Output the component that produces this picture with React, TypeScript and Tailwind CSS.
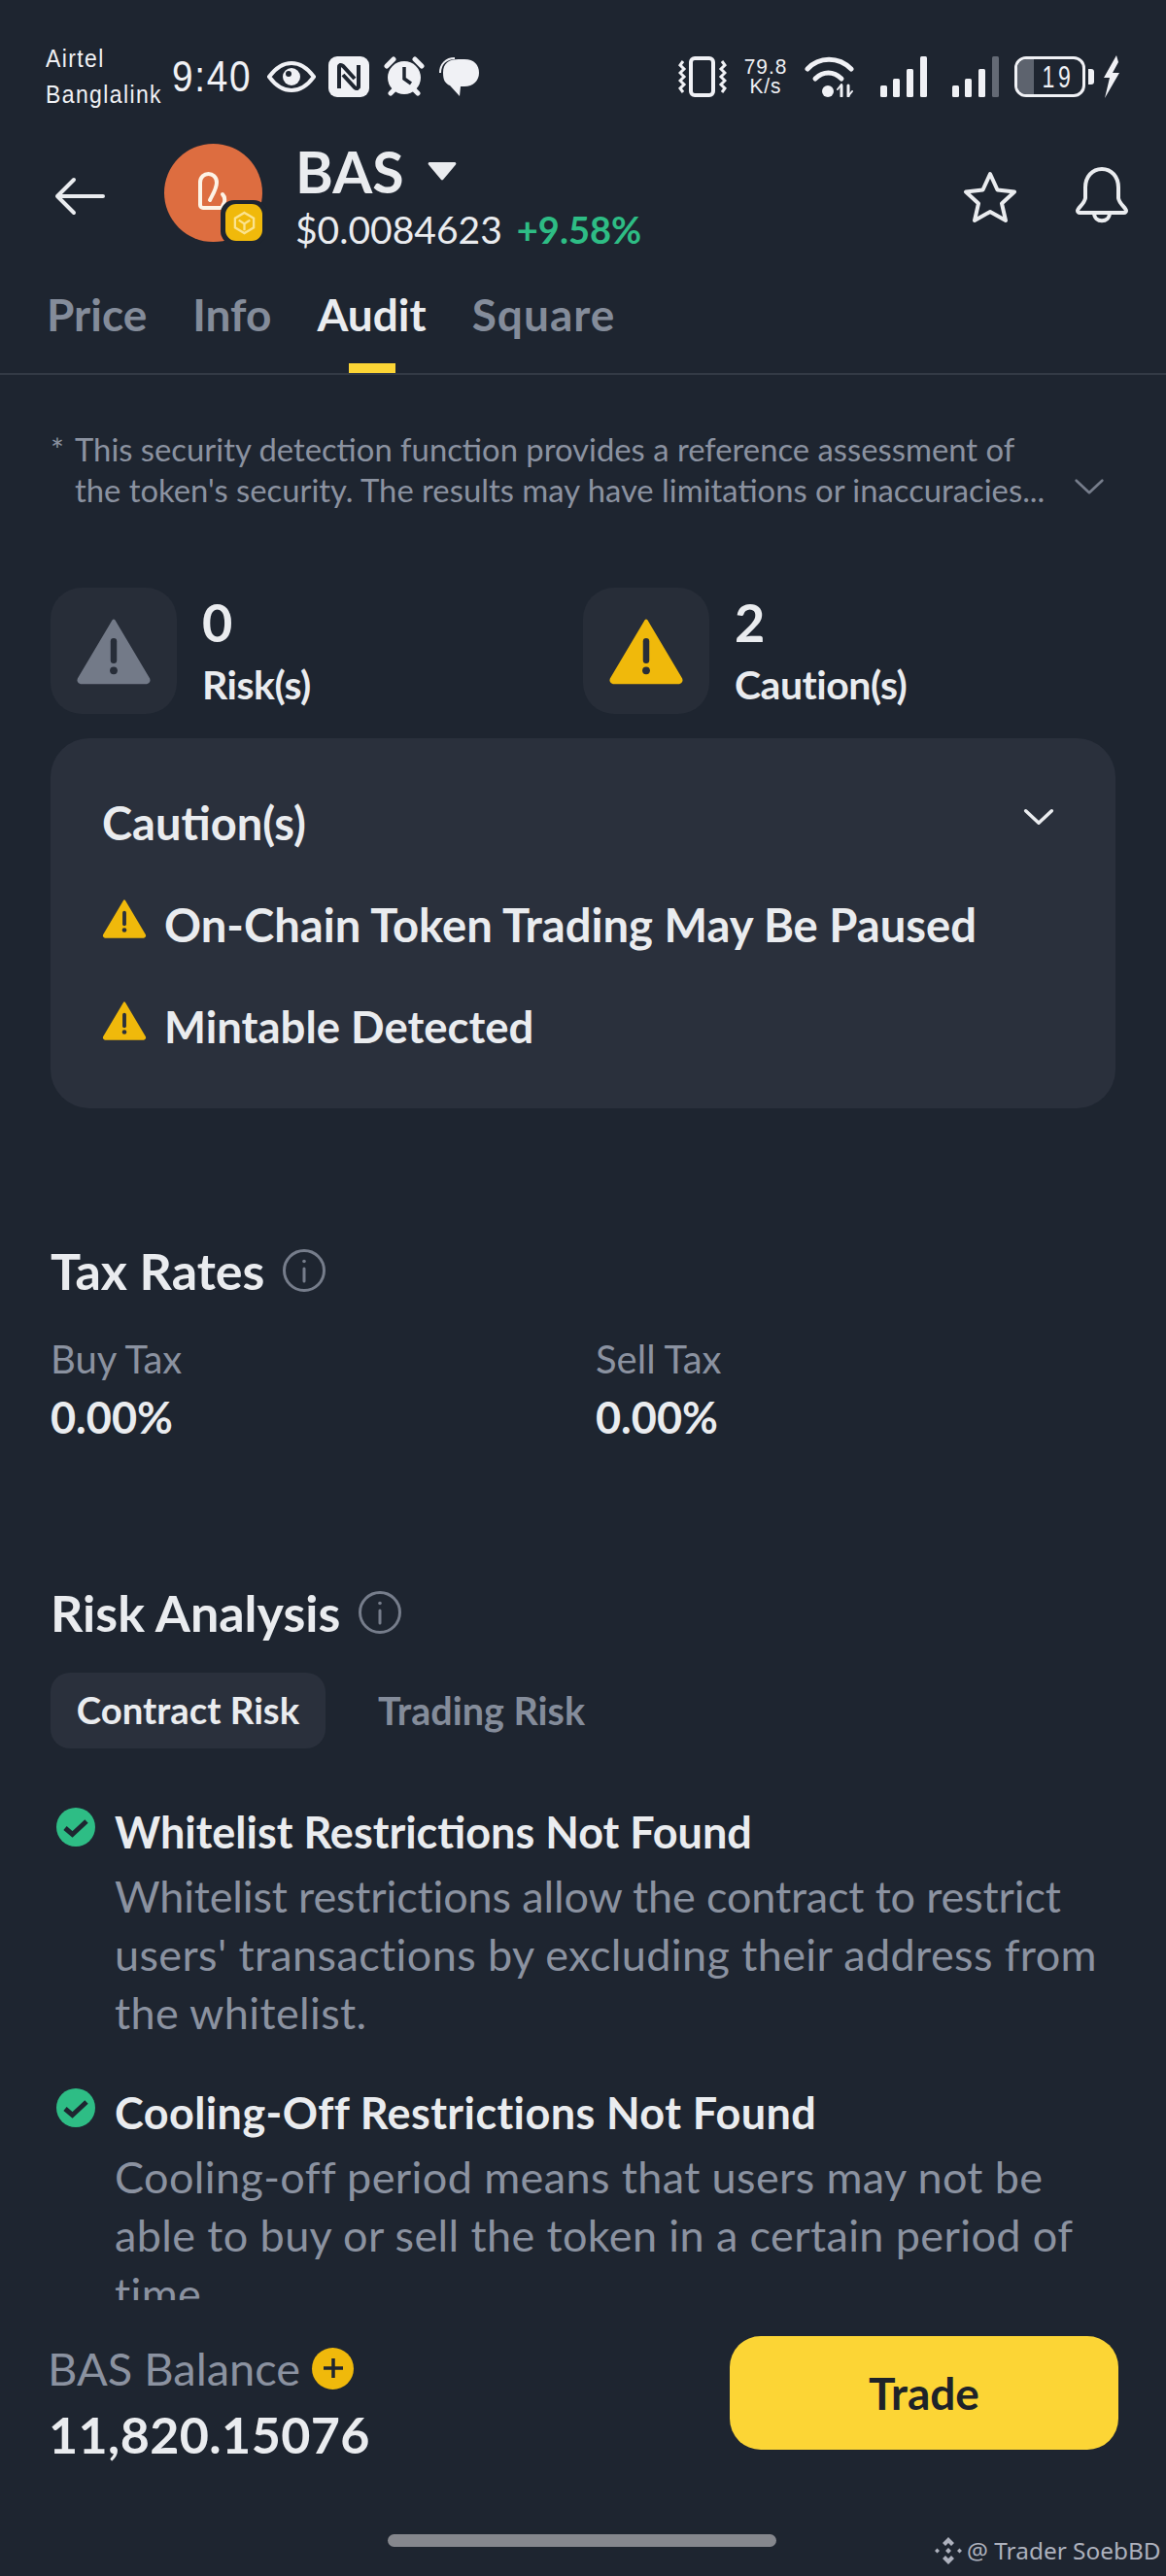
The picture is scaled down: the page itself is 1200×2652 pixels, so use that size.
import React from 'react';

const Triangle: React.FC<{ fill: string; mark: string; className?: string }> = ({ fill, mark, className }) => (
  <svg className={className} viewBox="0 0 48 42" fill="none">
    <path d="M24 2 L46 39 a1.5 1.5 0 0 1 -1 2 H3 a1.5 1.5 0 0 1 -1 -2 Z" fill={fill} stroke={fill} strokeWidth={2} strokeLinejoin="round" />
    <path d="M24 15v12" stroke={mark} strokeWidth={4} strokeLinecap="round" />
    <circle cx={24} cy={33.5} r={2.4} fill={mark} />
  </svg>
);

const InfoIcon: React.FC = () => (
  <svg className="w-[46px] h-[46px]" viewBox="0 0 46 46" fill="none" stroke="#767d8b" strokeWidth={3}>
    <circle cx={23} cy={23} r={20.5} />
    <path d="M23 21v13" strokeLinecap="round" />
    <circle cx={23} cy={13.5} r={1.8} fill="#767d8b" stroke="none" />
  </svg>
);

const CheckBadge: React.FC = () => (
  <svg className="w-[40px] h-[40px] ml-[6px] mt-[5px] shrink-0" viewBox="0 0 40 40">
    <circle cx={20} cy={20} r={20} fill="#2ebd85" />
    <path d="M9 21l7.5 6.5L31 14" fill="none" stroke="#1e2530" strokeWidth={5} />
  </svg>
);

const Chevron: React.FC<{ className: string; color: string; width: number }> = ({ className, color, width }) => (
  <svg className={className} viewBox="0 0 36 20" fill="none" stroke={color} strokeWidth={width} strokeLinecap="round" strokeLinejoin="round">
    <path d="M3 3l15 14L33 3" />
  </svg>
);

// status bar glyphs, all on a 41px tall line
const StatusLeft: React.FC = () => (
  <div className="flex items-center text-[#f0f1f5] h-[62px]">
    <div className="w-[130px] ml-[47px] font-['Liberation_Sans',sans-serif] text-[25px] leading-[37px] tracking-[1.5px] origin-left scale-x-[0.92]">
      <div className="whitespace-nowrap">Airtel</div>
      <div className="whitespace-nowrap">Banglalink</div>
    </div>
    <span className="w-[98px] font-['Liberation_Sans',sans-serif] text-[44px] leading-none tracking-[2px] origin-left scale-x-[0.88] whitespace-nowrap">9:40</span>
    <svg className="w-[50px] h-[34px]" viewBox="0 0 50 34" fill="none">
      <path d="M2 17C10 6 17 3 25 3s15 3 23 14c-8 11-15 14-23 14S10 28 2 17Z" stroke="#f0f1f5" strokeWidth={4} />
      <circle cx={25} cy={17} r={9} fill="#f0f1f5" />
      <circle cx={22} cy={14} r={3} fill="#1e2530" />
    </svg>
    <svg className="w-[42px] h-[42px] ml-[13px]" viewBox="0 0 42 42" fill="none">
      <rect width={42} height={42} rx={9} fill="#f0f1f5" />
      <path d="M11 33V11c0-2 2-3 4-1l12 13M31 9v22c0 2-2 3-4 1L15 19" stroke="#1e2530" strokeWidth={4} />
      <path d="M11 9v24M31 9v24" stroke="#1e2530" strokeWidth={3} />
    </svg>
    <svg className="w-[42px] h-[42px] ml-[15px]" viewBox="0 0 42 42" fill="none">
      <circle cx={21} cy={22} r={17} fill="#f0f1f5" />
      <path d="M3 10 10 3M39 10 32 3M7 38l5-5M35 38l-5-5" stroke="#f0f1f5" strokeWidth={5} strokeLinecap="round" />
      <path d="M21 11v12l7 5" stroke="#1e2530" strokeWidth={3.5} />
    </svg>
    <svg className="w-[42px] h-[42px] ml-[15px]" viewBox="0 0 42 42">
      <path d="M4 17C4 7 10 3 20 3h6c10 0 15 6 15 14s-6 14-15 14h-4l-1 10-10-11C6 28 4 24 4 17Z" fill="#f0f1f5" />
      <path d="M1 17C1 8 7 2 16 2" fill="none" stroke="#f0f1f5" strokeWidth={2} />
    </svg>
  </div>
);

const Bars: React.FC<{ dimLast?: boolean }> = ({ dimLast }) => (
  <svg className="w-[48px] h-[42px]" viewBox="0 0 48 42" fill="#f0f1f5">
    <rect x={0} y={30} width={7} height={12} rx={1.5} />
    <rect x={13} y={23} width={7} height={19} rx={1.5} />
    <rect x={27} y={13} width={7} height={29} rx={1.5} />
    <rect x={41} y={0} width={7} height={42} rx={1.5} fill={dimLast ? '#646a75' : '#f0f1f5'} />
  </svg>
);

const StatusRight: React.FC = () => (
  <div className="flex items-center text-[#f0f1f5] h-[62px] mr-[48px]">
    <svg className="w-[50px] h-[42px]" viewBox="0 0 50 42" fill="none" stroke="#f0f1f5">
      <rect x={13} y={2} width={23} height={38} rx={4} strokeWidth={4} />
      <path d="M5 5l-3 4 4 4-4 4 4 4-4 4 4 4-4 4 3 4M45 5l3 4-4 4 4 4-4 4 4 4-4 4 4 4-3 4" strokeWidth={3} />
    </svg>
    <div className="w-[50px] ml-[15px] font-['Liberation_Sans',sans-serif] text-center text-[22px] leading-[20px] tracking-[1px] scale-x-[0.95]">
      <div>79.8</div>
      <div>K/s</div>
    </div>
    <svg className="w-[52px] h-[42px] ml-[15px]" viewBox="0 0 52 42" fill="none" stroke="#f0f1f5" strokeLinecap="round">
      <path d="M3 13C15 0 35 0 48 13" strokeWidth={5} />
      <path d="M11 23c8-8 19-8 27 0" strokeWidth={5} />
      <circle cx={24} cy={36} r={6} fill="#f0f1f5" stroke="none" />
      <path d="M38 30v11M45 41V30" strokeWidth={3} />
      <path d="M38 29l-4 5M45 41l4-5" strokeWidth={2} />
    </svg>
    <div className="ml-[26px]"><Bars /></div>
    <div className="ml-[26px]"><Bars dimLast /></div>
    <div className="ml-[16px] w-[73px] h-[42px] rounded-[12px] border-[3px] border-[#f0f1f5] overflow-hidden flex">
      <div className="w-[17px] bg-[#5d636e]" />
      <div className="flex-1 font-['Liberation_Sans',sans-serif] text-[32px] leading-[36px] tracking-[5px] text-center scale-x-[0.72]">19</div>
    </div>
    <div className="ml-[3px] w-[6px] h-[16px] bg-[#f0f1f5] rounded-r-[3px]" />
    <svg className="w-[18px] h-[44px] ml-[8px]" viewBox="0 0 18 44" fill="#f0f1f5">
      <path d="M15 0 2 23h6L3 44l15-26h-7l6-11Z" />
    </svg>
  </div>
);

const Header: React.FC = () => (
  <div className="h-[110px] flex items-start">
    <svg className="w-[52px] h-[40px] ml-[56px] mt-[34px]" viewBox="0 0 52 40" fill="none" stroke="#eaecef" strokeWidth={4} strokeLinecap="round" strokeLinejoin="round">
      <path d="M20 3 3 20l17 17M3 20h47" />
    </svg>
    <div className="relative w-[101px] h-[101px] ml-[61px] rounded-full bg-[#dd6d40] shrink-0">
      <svg className="absolute left-[34px] top-[28px] w-[32px] h-[42px]" viewBox="0 0 32 42" fill="none" stroke="#fdf3e6" strokeWidth={4} strokeLinecap="round" strokeLinejoin="round">
        <path d="M24 38H6a3 3 0 0 1-3-3V12C3 0 20 0 20 12c0 6-4 12-7 18" />
        <path d="M26 24c3 3 3 8 0 12" />
      </svg>
      <div className="absolute left-[58px] top-[58px] w-[48px] h-[46px] rounded-[14px] bg-[#1e2530] flex items-center justify-center">
        <div className="w-[38px] h-[38px] rounded-[11px] bg-[#f0b90b] flex items-center justify-center">
          <svg className="w-[25px] h-[25px]" viewBox="0 0 26 26" fill="none" stroke="#fbe38e" strokeWidth={2.4}>
            <path d="M13 2l10 6v10l-10 6-10-6V8Z" />
            <path d="M7 10l6 4 6-4M13 14v7" />
          </svg>
        </div>
      </div>
    </div>
    <div className="ml-[34px]">
      <div className="flex items-center h-[60px] -mt-[2px]">
        <span className="text-[59px] leading-none font-bold text-[#eaecef]">BAS</span>
        <svg className="w-[30px] h-[20px] ml-[24px]" viewBox="0 0 30 20" fill="#eaecef">
          <path d="M2 1h26a1.5 1.5 0 0 1 1 2.5L16 19a1.5 1.5 0 0 1-2 0L1 3.500A1.500 1.500 0 0 1 2 1Z" />
        </svg>
      </div>
      <div className="flex items-center h-[48px] mt-[6px] whitespace-nowrap">
        <span className="text-[39px] leading-none text-[#eaecef]">$0.0084623</span>
        <span className="text-[38px] leading-none font-bold text-[#2ebd85] ml-[15px]">+9.58%</span>
      </div>
    </div>
    <svg className="w-[56px] h-[54px] ml-auto mt-[28px]" viewBox="0 0 56 54" fill="none" stroke="#eaecef" strokeWidth={4} strokeLinejoin="round">
      <path d="M28 3l7.500 16.500L53 21.500 40 33.500 44 51 28 42 12 51l4-17.500L3 21.500l17.500-2Z" />
    </svg>
    <svg className="w-[56px] h-[58px] ml-[59px] mr-[38px] mt-[24px]" viewBox="0 0 56 58" fill="none" stroke="#eaecef" strokeWidth={4} strokeLinejoin="round">
      <path d="M3 45c0-3 7-7 8-13V21C11 10 18 2 28 2s17 8 17 19v11c1 6 8 10 8 13 0 1-1 2-2 2H5c-1 0-2-1-2-2Z" />
      <path d="M20 47c0 11 16 11 16 0" />
    </svg>
  </div>
);

const Tabs: React.FC = () => {
  const tabs = ['Price', 'Info', 'Audit', 'Square'];
  return (
    <div className="h-[128px] border-b-2 border-[#333a45] flex gap-[47px] pl-[48px]">
      {tabs.map((tab) => (
        <div key={tab} className="flex flex-col items-center pt-[38px]">
          <span className={`text-[46px] leading-[56px] font-bold ${tab === 'Audit' ? 'text-[#eaecef]' : 'text-[#848c9a]'} ${tab === 'Square' ? 'tracking-[1px]' : ''}`}>{tab}</span>
          {tab === 'Audit' && <div className="w-[48px] h-[10px] bg-[#fcd535] mt-[22px]" />}
        </div>
      ))}
    </div>
  );
};

const Summary: React.FC<{ count: string; label: string; className?: string; children: React.ReactNode }> = ({ count, label, className, children }) => (
  <div className={`flex items-start ${className ?? ''}`}>
    <div className="w-[130px] h-[130px] rounded-[32px] bg-[#272d38] flex items-center justify-center">{children}</div>
    <div className="ml-[26px]">
      <div className="text-[54px] leading-[60px] font-bold text-[#eaecef] mt-[6px]">{count}</div>
      <div className="text-[41px] leading-[50px] font-bold text-[#eaecef] mt-[9px] tracking-[-0.5px]">{label}</div>
    </div>
  </div>
);

const CautionRow: React.FC<{ text: string; className?: string }> = ({ text, className }) => (
  <div className={`flex items-center h-[60px] ${className ?? ''}`}>
    <Triangle fill="#f0b90b" mark="#2a303c" className="w-[46px] h-[41px] -mt-[14px] shrink-0" />
    <span className="ml-[18px] leading-[60px] font-bold text-[#eaecef] whitespace-nowrap">{text}</span>
  </div>
);

const RiskItem: React.FC<{ title: string; lines: string[]; className?: string; titleClass?: string; firstClass?: string }> = ({ title, lines, className, titleClass, firstClass }) => (
  <div className={`flex gap-[20px] ${className ?? ''}`}>
    <CheckBadge />
    <div className="whitespace-nowrap">
      <div className={`text-[45px] leading-[60px] font-bold text-[#eaecef] h-[60px] ${titleClass ?? ''}`}>{title}</div>
      <div className="text-[45px] leading-[60px] text-[#8b92a0] mt-[6px] tracking-[0.38px]">
        {lines.map((line, i) => <div key={line} className={i === 0 ? firstClass : undefined}>{line}</div>)}
      </div>
    </div>
  </div>
);

export default function App() {
  return (
    <div className="relative w-[1200px] h-[2652px] bg-[#1e2530] flex flex-col overflow-hidden font-['Lato','Noto_Sans',sans-serif]">
      <div className="h-[148px] pt-[48px] flex justify-between shrink-0">
        <StatusLeft />
        <StatusRight />
      </div>
      <Header />
      <Tabs />

      <div className="flex-1 min-h-0 overflow-hidden px-[52px]">
        <div className="pt-[56px] flex text-[32.8px] leading-[42px] text-[#8b92a0] whitespace-nowrap">
          <span className="w-[25px]">*</span>
          <div className="w-[1000px]">
            <div>This security detection function provides a reference assessment of</div>
            <div>the token's security. The results may have limitations or inaccuracies...</div>
          </div>
          <Chevron className="w-[32px] h-[18px] mt-[50px] ml-[28px]" color="#767d8b" width={3} />
        </div>

        <div className="mt-[79px] flex">
          <Summary count="0" label="Risk(s)" className="w-[548px]">
            <Triangle fill="#737a88" mark="#272d38" className="w-[78px] h-[70px]" />
          </Summary>
          <Summary count="2" label="Caution(s)">
            <Triangle fill="#f0b90b" mark="#272d38" className="w-[78px] h-[70px]" />
          </Summary>
        </div>

        <div className="mt-[25px] h-[381px] rounded-[40px] bg-[#2a303c] px-[53px] pt-[57px]">
          <div className="flex items-center justify-between h-[60px]">
            <span className="text-[47px] leading-[60px] font-bold text-[#eaecef]">Caution(s)</span>
            <Chevron className="w-[32px] h-[18px] -mt-[12px] mr-[10px]" color="#eaecef" width={4} />
          </div>
          <CautionRow text="On-Chain Token Trading May Be Paused" className="mt-[45px] text-[47.2px]" />
          <CautionRow text="Mintable Detected" className="mt-[45px] text-[45.5px]" />
        </div>

        <div className="mt-[137px] h-[60px] flex items-center gap-[18px]">
          <span className="text-[52px] leading-[60px] font-bold text-[#eaecef]">Tax Rates</span>
          <InfoIcon />
        </div>
        <div className="mt-[37px] flex">
          <div className="w-[561px]">
            <div className="text-[40px] leading-[48px] text-[#8b92a0]">Buy Tax</div>
            <div className="text-[45px] leading-[48px] font-bold text-[#eaecef] mt-[12px]">0.00%</div>
          </div>
          <div>
            <div className="text-[40px] leading-[48px] text-[#8b92a0]">Sell Tax</div>
            <div className="text-[45px] leading-[48px] font-bold text-[#eaecef] mt-[12px]">0.00%</div>
          </div>
        </div>

        <div className="mt-[147px] h-[60px] flex items-center gap-[18px]">
          <span className="text-[52px] leading-[60px] font-bold text-[#eaecef]">Risk Analysis</span>
          <InfoIcon />
        </div>
        <div className="mt-[32px] flex items-center gap-[54px]">
          <div className="w-[283px] h-[78px] rounded-[20px] bg-[#2a303c] flex items-center justify-center text-[38.3px] font-bold text-[#eaecef] whitespace-nowrap">Contract Risk</div>
          <div className="text-[39.5px] font-bold text-[#848c9a]">Trading Risk</div>
        </div>

        <RiskItem
          className="mt-[56px]"
          title="Whitelist Restrictions Not Found"
          firstClass="tracking-[-0.15px]"
          lines={[
            'Whitelist restrictions allow the contract to restrict',
            "users' transactions by excluding their address from",
            'the whitelist.',
          ]}
        />
        <RiskItem
          className="mt-[43px]"
          title="Cooling-Off Restrictions Not Found"
          titleClass="tracking-[0.4px]"
          lines={[
            'Cooling-off period means that users may not be',
            'able to buy or sell the token in a certain period of',
            'time.',
          ]}
        />
      </div>

      <div className="h-[284px] shrink-0">
        <div className="h-[117px] mt-[37px] flex justify-between pl-[49px] pr-[49px]">
          <div className="pt-[5px]">
            <div className="flex items-center h-[56px]">
              <span className="text-[47px] leading-[56px] text-[#8b92a0]">BAS Balance</span>
              <div className="ml-[12px] w-[43px] h-[43px] rounded-full bg-[#f0b90b] flex items-center justify-center">
                <svg className="w-[24px] h-[24px]" viewBox="0 0 24 24" stroke="#1e2530" strokeWidth={3.5}>
                  <path d="M12 2v20M2 12h20" />
                </svg>
              </div>
            </div>
            <div className="text-[52px] leading-[60px] font-bold text-[#eaecef] mt-[10px] ml-[1px] tracking-[0.4px]">11,820.15076</div>
          </div>
          <div className="w-[400px] h-[117px] rounded-[32px] bg-[#fcd535] flex items-center justify-center text-[46px] font-bold text-[#1e2329]">Trade</div>
        </div>
        <div className="w-[400px] h-[13px] rounded-full bg-[#85878d] mt-[87px] ml-[399px]" />
      </div>

      {/* watermark sits over the bottom corner */}
      <div className="absolute left-[962px] top-[2610px] flex items-center gap-[5px] text-[#adb1bd] font-['Noto_Sans',sans-serif] text-[24.4px] leading-[32px] whitespace-nowrap">
        <svg className="w-[28px] h-[28px]" viewBox="0 0 28 28" fill="#adb1bd">
          <path d="M14 0l6 6-3 3-3-3-3 3-3-3ZM14 28l-6-6 3-3 3 3 3-3 3 3ZM2.500 11.500l2.500 2.500-2.500 2.500L0 14ZM25.500 11.500 28 14l-2.500 2.500L23 14ZM14 11l3 3-3 3-3-3Z" />
        </svg>
        <span>@ Trader SoebBD</span>
      </div>
    </div>
  );
}
